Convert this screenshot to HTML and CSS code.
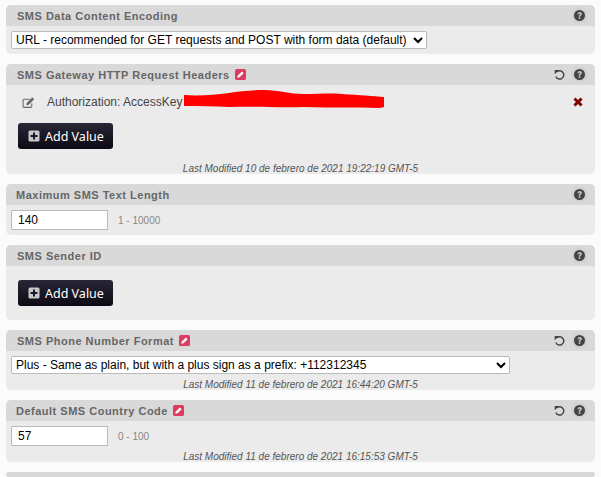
FILE: index.html
```html
<!DOCTYPE html>
<html lang="en">
<head>
    <meta charset="UTF-8">
    <title>SMS Settings</title>
    <link rel="stylesheet" href="styles.css">
</head>
<body>
    <svg class="sprites" width="0" height="0">
        <symbol id="i-help" viewBox="0 0 24 24">
            <path fill-rule="evenodd" d="M12 0a12 12 0 1 0 0 24 12 12 0 0 0 0-24zM7.500 9C8 6 10 4.500 12.500 4.500c2.700 0 4.700 1.700 4.700 4.100 0 1.800-1 2.800-2.300 3.600-.9.500-1.100.9-1.100 1.500v.8h-3.500v-1c0-1.600.8-2.500 2-3.200.9-.5 1.300-.9 1.300-1.500 0-.7-.6-1.100-1.300-1.100-.9 0-1.500.5-1.700 1.500zM10.300 16h3.500v3.500h-3.500z"/>
        </symbol>
        <symbol id="i-undo" viewBox="0 0 24 24">
            <path fill="none" stroke="currentColor" stroke-width="3.200" d="M6.500 6A9 9 0 1 1 4 16.500"/>
            <path d="M1.500 2l9.500 0-9.500 9.500z"/>
        </symbol>
        <symbol id="i-edit" viewBox="0 0 24 24">
            <path fill="none" stroke="currentColor" stroke-width="2" d="M18 14v5a2 2 0 0 1-2 2H4a2 2 0 0 1-2-2V8a2 2 0 0 1 2-2h10"/>
            <path d="M9 12.500L19 2.500l3.500 3.500-10 10-4.500 1z"/>
        </symbol>
        <symbol id="i-times" viewBox="0 0 24 24">
            <path d="M6 1l6 6 6-6 5 5-6 6 6 6-5 5-6-6-6 6-5-5 6-6-6-6z"/>
        </symbol>
        <symbol id="i-plus" viewBox="0 0 24 24">
            <path fill-rule="evenodd" d="M4 1h16a3 3 0 0 1 3 3v16a3 3 0 0 1-3 3H4a3 3 0 0 1-3-3V4a3 3 0 0 1 3-3zM10 5v5H5v4h5v5h4v-5h5v-4h-5V5z"/>
        </symbol>
        <symbol id="i-pencil" viewBox="0 0 24 24">
            <rect width="24" height="24" rx="4" fill="#dd3b61"/>
            <path fill="#fff" d="M5 19l1.200-5L15 5.200l3.800 3.800L10 17.800z"/>
        </symbol>
    </svg>

    <section class="setting">
        <header class="setting-head">
            <h3>SMS Data Content Encoding</h3>
            <svg class="icon help"><use href="#i-help"/></svg>
        </header>
        <div class="setting-body">
            <select class="field encoding">
                <option>URL - recommended for GET requests and POST with form data (default)</option>
            </select>
        </div>
    </section>

    <section class="setting">
        <header class="setting-head">
            <h3>SMS Gateway HTTP Request Headers</h3>
            <svg class="badge"><use href="#i-pencil"/></svg>
            <svg class="icon undo"><use href="#i-undo"/></svg>
            <svg class="icon help"><use href="#i-help"/></svg>
        </header>
        <div class="value-row">
            <svg class="icon edit"><use href="#i-edit"/></svg>
            <span class="value-text">Authorization: AccessKey</span>
            <svg class="redact" width="200" height="19" viewBox="0 0 200 19">
                <path fill="#f00" d="M0 5C15 6 30 5 45 3 55 1 70 0 80 0c15 0 25 4 40 4 15 0 25-1 38 0 17 1 32 2 42 3v10l-5 1c-25-1-45 0-75-1-30 1-50-1-75 0-15-1-30-1-45-1z"/>
            </svg>
            <svg class="remove"><use href="#i-times"/></svg>
        </div>
        <button class="add-btn"><svg class="plus"><use href="#i-plus"/></svg>Add Value</button>
        <p class="modified">Last Modified 10 de febrero de 2021 19:22:19 GMT-5</p>
    </section>

    <section class="setting">
        <header class="setting-head">
            <h3 class="tight">Maximum SMS Text Length</h3>
            <svg class="icon help"><use href="#i-help"/></svg>
        </header>
        <div class="setting-body number-row">
            <input class="field number" type="text" value="140">
            <span class="range">1 - 10000</span>
        </div>
    </section>

    <section class="setting">
        <header class="setting-head">
            <h3>SMS Sender ID</h3>
            <svg class="icon help"><use href="#i-help"/></svg>
        </header>
        <button class="add-btn sender"><svg class="plus"><use href="#i-plus"/></svg>Add Value</button>
    </section>

    <section class="setting">
        <header class="setting-head">
            <h3>SMS Phone Number Format</h3>
            <svg class="badge"><use href="#i-pencil"/></svg>
            <svg class="icon undo"><use href="#i-undo"/></svg>
            <svg class="icon help"><use href="#i-help"/></svg>
        </header>
        <div class="setting-body">
            <select class="field wide">
                <option>Plus - Same as plain, but with a plus sign as a prefix: +112312345</option>
            </select>
        </div>
        <p class="modified">Last Modified 11 de febrero de 2021 16:44:20 GMT-5</p>
    </section>

    <section class="setting">
        <header class="setting-head">
            <h3 class="tight">Default SMS Country Code</h3>
            <svg class="badge"><use href="#i-pencil"/></svg>
            <svg class="icon undo"><use href="#i-undo"/></svg>
            <svg class="icon help"><use href="#i-help"/></svg>
        </header>
        <div class="setting-body number-row">
            <input class="field number" type="text" value="57">
            <span class="range">0 - 100</span>
        </div>
        <p class="modified">Last Modified 11 de febrero de 2021 16:15:53 GMT-5</p>
    </section>

    <section class="setting last">
        <header class="setting-head"></header>
    </section>
</body>
</html>
```

FILE: styles.css
```css
* { margin: 0; padding: 0; box-sizing: border-box; }

html {
    height: 477px;
    overflow: hidden;
}

body {
    font-family: "Liberation Sans", Arial, sans-serif;
    background-color: #fbfbfb;
    padding: 5px 6px 0;
    height: 477px;
    overflow: hidden;
}

.sprites {
    display: block;
    height: 0;
}

.setting {
    background-color: #ebebeb;
    border-radius: 5px;
    margin-bottom: 10px;
    overflow: hidden;
}

.setting.last {
    height: 5px;
    margin-bottom: 0;
}

.setting-head {
    display: flex;
    align-items: center;
    height: 21px;
    padding: 0 10px 0 11px;
    background-color: #d9d9d9;
}

.setting-head h3 {
    font-size: 11px;
    font-weight: bold;
    letter-spacing: 0.5px;
    color: #666;
}

.setting-head h3.tight {
    margin-left: -1px;
}

.icon {
    width: 11px;
    height: 11px;
    flex: none;
    fill: currentColor;
}

.help {
    color: #444;
    margin-bottom: 1px;
    filter: drop-shadow(0 0 2px rgba(0, 0, 0, 0.15));
}

.undo {
    color: #444;
    margin: 0 9px 0 auto;
}

.badge {
    width: 11px;
    height: 11px;
    margin-left: 5px;
    flex: none;
}

.setting-head > h3 + .help {
    margin-left: auto;
}

.setting-body {
    padding: 5px;
}

.field {
    display: block;
    font-family: "Liberation Sans", Arial, sans-serif;
    font-size: 12px;
    color: #000;
    background-color: #fff;
    border: 1px solid #bbb;
    border-radius: 2px;
    height: 18px;
}

.encoding {
    width: 416px;
}

.wide {
    width: 499px;
}

.number-row {
    display: flex;
    align-items: center;
}

.number {
    width: 97px;
    height: 20px;
    padding-left: 6px;
    border-radius: 0;
}

.range {
    font-size: 10px;
    color: #888;
    margin-left: 10px;
}

.value-row {
    display: flex;
    align-items: center;
    height: 22px;
    margin-top: 6px;
    padding-left: 16px;
    padding-right: 10px;
}

.edit {
    width: 13px;
    height: 13px;
    color: #6b6670;
}

.value-text {
    font-size: 12px;
    color: #444;
    margin-left: 12px;
}

.redact {
    margin: 0 0 5px 2px;
    flex: none;
}

.remove {
    width: 10px;
    height: 10px;
    margin-left: auto;
    margin-right: 2px;
    fill: #800000;
}

.add-btn {
    display: flex;
    align-items: center;
    gap: 5px;
    width: 95px;
    height: 26px;
    margin: 10px 0 0 12px;
    padding-left: 10px;
    border: none;
    border-radius: 3px;
    background: linear-gradient(to bottom, #2a2637, #0c0a14);
    color: #fff;
    font-family: "Noto Sans", sans-serif;
    font-size: 12.5px;
}

.add-btn.sender {
    margin-top: 14px;
    margin-bottom: 14px;
}

.plus {
    width: 12px;
    height: 12px;
    flex: none;
    fill: #c9c8cc;
}

.modified {
    font-size: 10px;
    font-style: italic;
    color: #555;
    text-align: center;
    line-height: 11px;
}

.add-btn + .modified {
    margin-top: 14px;
}
```
